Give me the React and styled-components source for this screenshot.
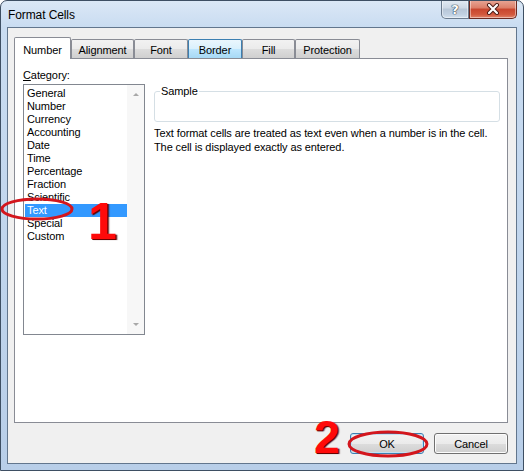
import React from "react";
import styled, { createGlobalStyle } from "styled-components";

const categories = [
  "General",
  "Number",
  "Currency",
  "Accounting",
  "Date",
  "Time",
  "Percentage",
  "Fraction",
  "Scientific",
  "Text",
  "Special",
  "Custom",
];

const tabs = [
  { label: "Number", width: 57, active: true },
  { label: "Alignment", width: 63 },
  { label: "Font", width: 54 },
  { label: "Border", width: 54, hover: true },
  { label: "Fill", width: 53 },
  { label: "Protection", width: 65 },
];

const GlobalStyle = createGlobalStyle`
  html, body {
    margin: 0;
    padding: 0;
    background: #ffffff;
  }
  body {
    font-family: "Liberation Sans", Arial, sans-serif;
    font-size: 11px;
    letter-spacing: -0.1px;
    color: #000;
  }
`;

const Page = styled.div`
  position: relative;
  width: 524px;
  height: 471px;
`;

const Window = styled.div`
  width: 524px;
  height: 471px;
  box-sizing: border-box;
  border: 1px solid #3e4f63;
  border-radius: 7px 7px 0 0;
  background: linear-gradient(
    to bottom,
    #dbe8f6 0px,
    #c9dcf1 26px,
    #bfd4ec 60%,
    #b8cee8 100%
  );
  display: flex;
  flex-direction: column;
  overflow: hidden;
`;

const TitleBar = styled.div`
  height: 26px;
  display: flex;
  align-items: flex-start;
  padding-left: 7px;
`;

const Title = styled.div`
  flex: 1;
  margin-top: 6px;
  line-height: 16px;
  font-size: 12px;
`;

const Controls = styled.div`
  display: flex;
  margin: -1px 6px 0 0;
`;

const CaptionButton = styled.div`
  width: ${(p) => p.$w}px;
  height: 19px;
  box-sizing: border-box;
  border: 1px solid ${(p) => (p.$close ? "#6b2a22" : "#6b7b8e")};
  border-top: none;
  border-radius: ${(p) => (p.$close ? "0 0 5px 0" : "0 0 0 5px")};
  background: ${(p) =>
    p.$close
      ? "linear-gradient(to bottom, #e8a898 0%, #dc7d67 45%, #c8452e 50%, #d2583d 80%, #e0846a 100%)"
      : "linear-gradient(to bottom, #e3ebf4 0%, #cdd8e5 45%, #b7c6d7 50%, #c2d1e2 80%, #d4e1ef 100%)"};
  box-shadow: inset 0 0 0 1px rgba(255, 255, 255, 0.45);
  display: flex;
  align-items: center;
  justify-content: center;
`;

const HelpGlyph = styled.span`
  font-family: "DejaVu Sans", sans-serif;
  font-weight: bold;
  font-size: 13px;
  line-height: 1;
  color: #ffffff;
  text-shadow: 0 0 1px #2b3a4a, 0 0 1px #2b3a4a, 0 0 1px #2b3a4a;
`;

const Client = styled.div`
  flex: 1;
  margin: 0 6px 6px 6px;
  border: 1px solid #62768d;
  background: #f0f0f0;
  display: flex;
  flex-direction: column;
  padding: 9px 8px 9px 6px;
`;

const TabRow = styled.div`
  display: flex;
  align-items: flex-end;
  height: 21px;
`;

const Tab = styled.div`
  position: relative;
  z-index: ${(p) => (p.$active ? 1 : 0)};
  width: ${(p) => p.$w}px;
  height: ${(p) => (p.$active ? 22 : 19)}px;
  margin-bottom: ${(p) => (p.$active ? -1 : 0)}px;
  box-sizing: border-box;
  border: 1px solid ${(p) => (p.$hover ? "#3c7fb1" : "#898c95")};
  border-bottom: none;
  border-radius: 2px 2px 0 0;
  background: ${(p) =>
    p.$active
      ? "#ffffff"
      : p.$hover
      ? "linear-gradient(to bottom, #eaf6fd 0%, #d9f0fc 50%, #bee6fd 50%, #a7d9f5 100%)"
      : "linear-gradient(to bottom, #f2f2f2 0%, #ebebeb 50%, #dddddd 50%, #cfcfcf 100%)"};
  display: flex;
  align-items: center;
  justify-content: center;
  padding-top: 2px;
  line-height: 14px;
`;

const Panel = styled.div`
  flex: 1;
  border: 1px solid #898c95;
  background: #ffffff;
  padding: 9px 7px 0 8px;
  display: flex;
  gap: 9px;
`;

const LeftCol = styled.div`
  width: 122px;
  display: flex;
  flex-direction: column;
`;

const Label = styled.div`
  line-height: 14px;
  height: 14px;
  margin-bottom: 2px;
`;

const ListBox = styled.div`
  height: 251px;
  box-sizing: border-box;
  border: 1px solid #828790;
  display: flex;
  background: #ffffff;
`;

const Items = styled.div`
  flex: 1;
  padding: 2px 0 0 1px;
`;

const Item = styled.div`
  height: 13px;
  line-height: 13px;
  padding-left: 2px;
  background: ${(p) => (p.$selected ? "#3399ff" : "transparent")};
  color: ${(p) => (p.$selected ? "#ffffff" : "#000000")};
`;

const ScrollBar = styled.div`
  width: 17px;
  background: #f7f7f7;
  display: flex;
  flex-direction: column;
  justify-content: space-between;
  align-items: center;
  padding: 8px 0;
`;

const Arrow = styled.div`
  width: 0;
  height: 0;
  border-left: 3px solid transparent;
  border-right: 3px solid transparent;
  ${(p) =>
    p.$down
      ? "border-top: 3px solid #a8a8a8;"
      : "border-bottom: 3px solid #a8a8a8;"}
`;

const RightCol = styled.div`
  flex: 1;
  padding-top: 16px;
`;

const SampleGroup = styled.fieldset`
  margin: 0;
  padding: 0;
  min-width: 0;
  border: 1px solid #d5dfe5;
  border-radius: 3px;
`;

const Legend = styled.legend`
  margin-left: 5px;
  padding: 0 1px;
  line-height: 14px;
`;

const SampleValue = styled.div`
  height: 23px;
`;

const Description = styled.p`
  margin: 4px 0 0;
  line-height: 14px;
  white-space: nowrap;
`;

const Footer = styled.div`
  display: flex;
  justify-content: flex-end;
  gap: 10px;
  margin-top: 10px;
`;

const Button = styled.div`
  width: 74px;
  height: 21px;
  box-sizing: border-box;
  border: 1px solid ${(p) => (p.$default ? "#3c7fb1" : "#707070")};
  border-radius: 3px;
  background: linear-gradient(
    to bottom,
    #f2f2f2 0%,
    #ebebeb 50%,
    #dddddd 50%,
    #cfcfcf 100%
  );
  box-shadow: inset 0 0 0 1px ${(p) => (p.$default ? "#bfe3f6" : "#fcfcfc")};
  display: flex;
  align-items: center;
  justify-content: center;
`;

const Overlay = styled.svg`
  position: absolute;
  left: 0;
  top: 0;
  pointer-events: none;
`;

const Marker = styled.span`
  position: absolute;
  left: ${(p) => p.$x}px;
  top: ${(p) => p.$y}px;
  font-family: "Liberation Sans", Arial, sans-serif;
  font-weight: bold;
  font-size: ${(p) => p.$size}px;
  line-height: 1;
  letter-spacing: 0;
  color: #ff0a0a;
  text-shadow: 1px 1px 0 #6a0000, 2px 1px 1px rgba(60, 0, 0, 0.6);
  pointer-events: none;
`;

const CloseIcon = () => (
  <svg width="14" height="12" viewBox="0 0 14 12">
    <path d="M3 2 L11 10 M11 2 L3 10" stroke="#4a1a14" strokeWidth="4" strokeLinecap="round" />
    <path d="M3 2 L11 10 M11 2 L3 10" stroke="#ffffff" strokeWidth="2.2" strokeLinecap="round" />
  </svg>
);

export default function App() {
  return (
    <Page>
      <GlobalStyle />
      <Window>
        <TitleBar>
          <Title>Format Cells</Title>
          <Controls>
            <CaptionButton $w={28}>
              <HelpGlyph>?</HelpGlyph>
            </CaptionButton>
            <CaptionButton $w={48} $close>
              <CloseIcon />
            </CaptionButton>
          </Controls>
        </TitleBar>
        <Client>
          <TabRow>
            {tabs.map((t) => (
              <Tab key={t.label} $w={t.width} $active={t.active} $hover={t.hover}>
                {t.label}
              </Tab>
            ))}
          </TabRow>
          <Panel>
            <LeftCol>
              <Label>
                <u>C</u>ategory:
              </Label>
              <ListBox>
                <Items>
                  {categories.map((c) => (
                    <Item key={c} $selected={c === "Text"}>
                      {c}
                    </Item>
                  ))}
                </Items>
                <ScrollBar>
                  <Arrow />
                  <Arrow $down />
                </ScrollBar>
              </ListBox>
            </LeftCol>
            <RightCol>
              <SampleGroup>
                <Legend>Sample</Legend>
                <SampleValue />
              </SampleGroup>
              <Description>
                Text format cells are treated as text even when a number is in the cell.
                <br />
                The cell is displayed exactly as entered.
              </Description>
            </RightCol>
          </Panel>
          <Footer>
            <Button $default>OK</Button>
            <Button>Cancel</Button>
          </Footer>
        </Client>
      </Window>
      <Overlay width="524" height="471" viewBox="0 0 524 471">
        <ellipse cx="37" cy="209" rx="35" ry="10" fill="none" stroke="#d3161d" strokeWidth="3" />
        <ellipse cx="388" cy="444" rx="39" ry="12" fill="none" stroke="#d3161d" strokeWidth="3" />
      </Overlay>
      <Marker $x={88} $y={195} $size={52}>
        1
      </Marker>
      <Marker $x={314} $y={414} $size={46}>
        2
      </Marker>
    </Page>
  );
}
